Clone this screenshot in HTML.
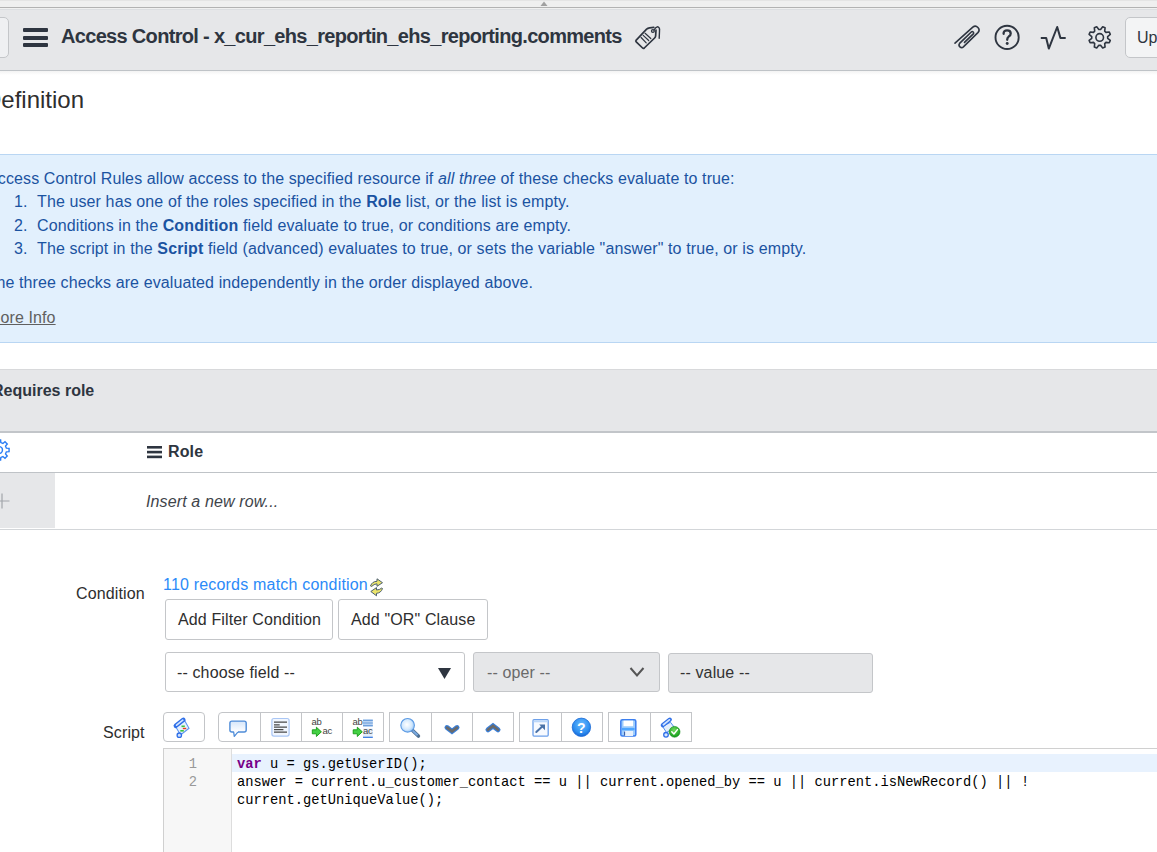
<!DOCTYPE html>
<html><head><meta charset="utf-8">
<style>
*{box-sizing:border-box;margin:0;padding:0}
html,body{width:1157px;height:852px;overflow:hidden;background:#fff;font-family:"Liberation Sans",sans-serif;color:#2e2e2e;position:relative}
svg{position:absolute;overflow:visible}
#s0{position:absolute;left:0;top:0;width:1157px;height:1px;background:#e4e4e4}
#s1{position:absolute;left:0;top:1px;width:1157px;height:6px;background:#efefef}
#s2{position:absolute;left:0;top:7px;width:1157px;height:1px;background:#b2b2b2}
#s3{position:absolute;left:0;top:8px;width:1157px;height:1px;background:#f0f0f0}
#s4{position:absolute;left:0;top:9px;width:1157px;height:1px;background:#dcdee1}
#hdr{position:absolute;left:0;top:10px;width:1157px;height:61px;background:#e6e7e9;border-bottom:1px solid #bfc3c7}
#shad{position:absolute;left:0;top:71px;width:1157px;height:4px;background:linear-gradient(#f3f3f3,#fff)}
#lbtn{position:absolute;left:-30px;top:17px;width:39px;height:41px;background:#eff0f2;border:1px solid #c4c6c9;border-radius:5px}
.ham i{position:absolute;left:23px;width:25px;height:4px;background:#2e3540;border-radius:1px}
#title{position:absolute;left:61px;top:25px;font-size:20px;line-height:23px;font-weight:bold;color:#2e3540;white-space:nowrap;letter-spacing:-0.68px}
#upd{position:absolute;left:1125px;top:17px;width:60px;height:41px;background:#f3f4f5;border:1px solid #c4c6c9;border-radius:5px;font-size:16px;color:#2e3540;padding:11px 0 0 11px;line-height:18px}
#def{position:absolute;left:-16px;top:86px;font-size:24px;line-height:27px;color:#2e2e2e;white-space:nowrap}
#info{position:absolute;left:0;top:154px;width:1157px;height:189px;background:#e2f0fd;border-top:1px solid #b9d6f3;border-bottom:1px solid #b9d6f3;color:#1b53a1;font-size:16px;line-height:18px}
#info .t{position:absolute;white-space:nowrap;letter-spacing:0.115px}
#rr{position:absolute;left:0;top:369px;width:1157px;height:64px;background:#e6e7e9;border-top:1px solid #d8d9db;border-bottom:2px solid #c2c5c9}
#rr .t{position:absolute;left:-8px;top:12px;font-size:16px;line-height:18px;font-weight:bold;color:#2e3540;white-space:nowrap}
#thead{position:absolute;left:0;top:433px;width:1157px;height:40px;border-bottom:1px solid #bfc3c7;background:#fff}
#irow{position:absolute;left:0;top:473px;width:1157px;height:57px;border-bottom:1px solid #d3d6d9;background:#fff}
#irow .c0{position:absolute;left:0;top:0;width:55px;height:55px;background:#e6e7e9}
.lbl{position:absolute;font-size:16px;line-height:18px;color:#2e2e2e;white-space:nowrap;letter-spacing:0.13px}
.btn{position:absolute;height:41px;border:1px solid #c4c6c9;border-radius:3px;background:#fff;font-size:16px;color:#2e2e2e;white-space:nowrap}
.btn span{position:absolute;top:11px;line-height:18px;letter-spacing:0.13px}
.sel{position:absolute;height:40px;border:1px solid #c4c6c9;border-radius:3px;font-size:16px;white-space:nowrap}
.sel span{position:absolute;left:11px;top:10px;line-height:18px;letter-spacing:0.13px}
.tg{position:absolute;top:712px;height:30px;border:1px solid #c3c5c8;background:#fff}
.tg i{position:absolute;top:0;width:1px;height:28px;background:#c3c5c8}
#code{position:absolute;left:163px;top:748px;width:1010px;height:120px;border:1px solid #d0d0d0;background:#fff}
#gut{position:absolute;left:0;top:0;width:68px;height:118px;background:#f7f7f7;border-right:1px solid #ddd}
#hl{position:absolute;left:68px;top:5px;width:940px;height:18px;background:#e8f2fe}
.ln{position:absolute;left:23px;font-family:"Liberation Mono",monospace;font-size:13.75px;line-height:18px;color:#999;width:10px;text-align:right}
.cl{position:absolute;left:73px;font-family:"Liberation Mono",monospace;font-size:13.75px;line-height:18px;color:#000;white-space:pre}
</style></head><body>
<div id="s0"></div><div id="s1"></div><div id="s2"></div><div id="s3"></div><div id="s4"></div>
<svg style="left:0;top:0" width="1157" height="10"><path d="M540.5,6 L544,1.5 L547.5,6 Z" fill="#a0a0a0"/></svg>
<div id="hdr"></div>
<div id="shad"></div>
<div id="lbtn"></div>
<div class="ham"><i style="top:28px"></i><i style="top:36px"></i><i style="top:43px"></i></div>
<div id="title">Access Control - x_cur_ehs_reportin_ehs_reporting.comments</div>
<!-- tag icon -->
<svg style="left:0;top:0" width="1157" height="70">
  <g fill="none" stroke="#2e3540" stroke-width="1.7" stroke-linejoin="round" stroke-linecap="round">
    <path d="M636,40.3 L646.6,29.2 Q647.8,28.2 649.5,27.9 L653.8,27.3 M656,30.2 L655.6,36.2 Q655.4,37.2 654.6,38 L644.3,48 Q643.4,48.8 642.6,48 L636.2,41.8 Q635.4,41 636,40.3"/>
    <path d="M641.1,37.5 L646.2,42.8 M643.2,35.4 L648.7,40.5 M645.1,33.3 L650.8,38.5" stroke-width="1.2"/>
    <circle cx="652.9" cy="31" r="1.4" stroke-width="1.3"/>
    <path d="M654,30 Q656,26.5 658,26.8 Q660,27.5 659.5,31 L659.2,38.2" stroke-width="1.4"/>
  </g>
  <!-- paperclip -->
  <path d="M955,43.2 L972.8,27.2 A3.72,3.72 0 0 1 977.9,32.6 L963.4,46.9 A2.6,2.6 0 0 1 959.6,43.4 L971.3,32 A1.38,1.38 0 0 1 973.3,33.9 L964.5,42.4" fill="none" stroke="#2e3540" stroke-width="1.6" stroke-linecap="round"/>
<!-- help -->
  <circle cx="1007.1" cy="37.4" r="11.6" fill="none" stroke="#2e3540" stroke-width="1.9"/>
  <path d="M1003.6,33.8 Q1003.4,30.4 1007.1,30.4 Q1010.7,30.4 1010.7,33.5 Q1010.7,35.4 1008.7,36.6 Q1007.2,37.6 1007.2,39.8" fill="none" stroke="#2e3540" stroke-width="2.3" stroke-linecap="round"/>
  <circle cx="1007.2" cy="43.5" r="1.45" fill="#2e3540"/>
  <!-- pulse -->
  <polyline points="1040.8,37.9 1046.2,37.9 1048.8,48.6 1057.2,27 1060.4,37.9 1065.7,37.9" fill="none" stroke="#2e3540" stroke-width="2" stroke-linejoin="round"/>
  <!-- gear -->
  <g transform="translate(1099.7,37.4)" fill="none" stroke="#2e3540" stroke-width="1.6" stroke-linejoin="round">
    <path d="M0.88,-7.95 L2.99,-10.59 L5.37,-9.60 L5.00,-6.24 L6.24,-5.00 L9.60,-5.37 L10.59,-2.99 L7.95,-0.88 L7.95,0.88 L10.59,2.99 L9.60,5.37 L6.24,5.00 L5.00,6.24 L5.37,9.60 L2.99,10.59 L0.88,7.95 L-0.88,7.95 L-2.99,10.59 L-5.37,9.60 L-5.00,6.24 L-6.24,5.00 L-9.60,5.37 L-10.59,2.99 L-7.95,0.88 L-7.95,-0.88 L-10.59,-2.99 L-9.60,-5.37 L-6.24,-5.00 L-5.00,-6.24 L-5.37,-9.60 L-2.99,-10.59 L-0.88,-7.95 Z"/>
    <circle r="3.8"/>
  </g>
</svg>
<div id="upd">Up</div>
<div id="def">Definition</div>
<div id="info">
  <div class="t" id="l1" style="left:-13px;top:15px">Access Control Rules allow access to the specified resource if <i>all three</i> of these checks evaluate to true:</div>
  <div class="t" style="left:14px;top:38px">1.</div><div class="t" id="i1" style="left:37px;top:38px">The user has one of the roles specified in the <b>Role</b> list, or the list is empty.</div>
  <div class="t" style="left:14px;top:62px">2.</div><div class="t" id="i2" style="left:37px;top:62px">Conditions in the <b>Condition</b> field evaluate to true, or conditions are empty.</div>
  <div class="t" style="left:14px;top:85px">3.</div><div class="t" id="i3" style="left:37px;top:85px">The script in the <b>Script</b> field (advanced) evaluates to true, or sets the variable "answer" to true, or is empty.</div>
  <div class="t" id="l5" style="left:-13.5px;top:119px">The three checks are evaluated independently in the order displayed above.</div>
  <div class="t" id="l6" style="left:-13px;top:154px;color:#606060;text-decoration:underline">More Info</div>
</div>
<div id="rr"><div class="t">Requires role</div></div>
<div id="thead"></div>
<svg style="left:0;top:0" width="1157" height="852">
  <g fill="#2e3540"><rect x="147" y="446" width="15" height="2.6"/><rect x="147" y="450.8" width="15" height="2.6"/><rect x="147" y="455.6" width="15" height="2.6"/></g>
</svg>
<div class="lbl" style="left:168px;top:443px;font-weight:bold;color:#2e3540">Role</div>
<div id="irow">
  <div class="c0"></div>
  <div class="lbl" style="left:146px;top:20px;font-style:italic;color:#40444a">Insert a new row...</div>
</div>
<svg style="left:0;top:0" width="200" height="600">
  <path d="M-6,501 L9.5,501 M2,493.5 L2,508.5" stroke="#a2a6ab" stroke-width="1.2" fill="none"/>
  <g transform="translate(-1,450)" fill="none" stroke="#2a7df5" stroke-width="1.4">
    <path d="M-1.83,-7.38 L-1.60,-10.07 L1.60,-10.07 L1.83,-7.38 L3.92,-6.51 L6.00,-8.25 L8.25,-6.00 L6.51,-3.92 L7.38,-1.83 L10.07,-1.60 L10.07,1.60 L7.38,1.83 L6.51,3.92 L8.25,6.00 L6.00,8.25 L3.92,6.51 L1.83,7.38 L1.60,10.07 L-1.60,10.07 L-1.83,7.38 L-3.92,6.51 L-6.00,8.25 L-8.25,6.00 L-6.51,3.92 L-7.38,1.83 L-10.07,1.60 L-10.07,-1.60 L-7.38,-1.83 L-6.51,-3.92 L-8.25,-6.00 L-6.00,-8.25 L-3.92,-6.51 Z"/>
    <circle r="3.5"/>
  </g>
</svg>
<div class="lbl" style="left:76px;top:585px">Condition</div>
<div class="lbl" style="left:163px;top:576px;color:#2b8af8;letter-spacing:0.19px">110 records match condition</div>
<svg style="left:0;top:0" width="400" height="600">
  <g fill="#ebe46c" stroke="#4d6070" stroke-width="1" stroke-linejoin="round">
    <path d="M370.5,586 Q372,581.5 377,581.3 L377,578.8 L382.5,582.7 L377,586.3 L377,583.8 Q374,584 371.5,586.5 Z"/>
    <path d="M382.5,588.5 Q381,593 376.5,593.3 L376.5,595.8 L370.8,591.5 L376.5,587.6 L376.5,590 Q379.5,590 381.8,588 Z"/>
  </g>
</svg>
<div class="btn" style="left:165px;top:599px;width:168px"><span style="left:12px">Add Filter Condition</span></div>
<div class="btn" style="left:338px;top:599px;width:150px"><span style="left:12px">Add "OR" Clause</span></div>
<div class="sel" style="left:165px;top:652px;width:300px;background:#fff;color:#2e2e2e"><span style="top:11px">-- choose field --</span></div>
<div class="sel" style="left:473px;top:652px;width:187px;background:#e6e7e9;color:#6a6a6a"><span style="left:13px;top:11px">-- oper --</span></div>
<div class="sel" style="left:668px;top:653px;width:205px;background:#e6e7e9;color:#333"><span>-- value --</span></div>
<svg style="left:0;top:0" width="900" height="700">
  <path d="M438,668 L451,668 L444.5,679 Z" fill="#2e3540"/>
  <path d="M630.5,668 L637,675.5 L643.5,668" fill="none" stroke="#555" stroke-width="2"/>
</svg>
<div class="lbl" style="left:103px;top:724px">Script</div>
<!-- toolbar -->
<div class="tg" style="left:163px;width:42px;border-radius:4px"></div>
<div class="tg" style="left:218px;width:166px;border-radius:4px 0 0 4px"><i style="left:41px"></i><i style="left:82px"></i><i style="left:123px"></i></div>
<div class="tg" style="left:389px;width:125px"><i style="left:41px"></i><i style="left:82px"></i></div>
<div class="tg" style="left:519px;width:84px"><i style="left:41px"></i></div>
<div class="tg" style="left:608px;width:84px"><i style="left:41px"></i></div>
<svg style="left:0;top:0" width="1157" height="852">
  <defs>
    <linearGradient id="gb" x1="0" y1="0" x2="0" y2="1"><stop offset="0" stop-color="#d6e6fa"/><stop offset="1" stop-color="#ffffff"/></linearGradient>
    <radialGradient id="gs" cx="0.45" cy="0.45" r="0.6"><stop offset="0" stop-color="#ffffff"/><stop offset="0.6" stop-color="#d4e9fd"/><stop offset="1" stop-color="#8fc1f3"/></radialGradient>
    <radialGradient id="gh" cx="0.5" cy="0.35" r="0.65"><stop offset="0" stop-color="#6bbcff"/><stop offset="0.7" stop-color="#2d8ef0"/><stop offset="1" stop-color="#1566d6"/></radialGradient>
    <radialGradient id="gg" cx="0.45" cy="0.35" r="0.65"><stop offset="0" stop-color="#6fdc5a"/><stop offset="1" stop-color="#119a1a"/></radialGradient>
  </defs>
  <!-- 1 script -->
  <g>
    <path d="M175.8,727 L184.6,720.6 L189,728.3 L180.6,735 Z" fill="#e6f0fd" stroke="#5b95f0" stroke-width="1.1"/>
    <path d="M175.8,725.8 L183.4,719.8" stroke="#2f6fe8" stroke-width="4.4" stroke-linecap="round"/>
    <path d="M176.6,725.2 L182.8,720.2" stroke="#d2e4ff" stroke-width="1.7" stroke-linecap="round"/>
    <circle cx="179.3" cy="735.2" r="2.2" fill="#cfe0fb" stroke="#2f6fe8" stroke-width="1.3"/>
    <path d="M181.5,726.3 L184.8,726.3" stroke="#3cc43c" stroke-width="1.6"/>
    <path d="M182.8,728.5 L186.2,728.5" stroke="#e8401c" stroke-width="1.4"/>
    <path d="M180.3,730.8 L183.8,730.8" stroke="#3cc43c" stroke-width="1.6"/>
  </g>
  <!-- 2 comment -->
  <g>
    <rect x="229.9" y="721.1" width="16.3" height="10.9" rx="2" fill="url(#gb)" stroke="#4f8cd8" stroke-width="1.4"/>
    <path d="M233.6,731.6 L234.3,736.3 L238.2,731.6" fill="#fff" stroke="#4f8cd8" stroke-width="1.3" stroke-linejoin="round"/>
    <path d="M233.9,731.3 L238,731.3" stroke="#fff" stroke-width="1"/>
  </g>
  <!-- 3 format -->
  <g>
    <rect x="271.9" y="718.5" width="17.2" height="17.6" rx="2" fill="#f1f6fe" stroke="#a9c6f5" stroke-width="1.2"/>
    <g stroke="#4a4a4a" stroke-width="1.3">
      <path d="M274,722.2 L287,722.2 M274,724.8 L279.7,724.8 M274,727.2 L287,727.2 M274,729.7 L283.4,729.7 M274,732.1 L287,732.1"/>
    </g>
  </g>
  <!-- 4 replace -->
  <g font-family="Liberation Sans" font-size="9.5" fill="#444" letter-spacing="-0.4">
    <text x="311.6" y="725.4">ab</text>
    <text x="322.6" y="734.2">ac</text>
    <path d="M312.3,729.8 L316.4,729.8 L316.4,727.2 L321.4,731.8 L316.4,736.5 L316.4,733.8 L312.3,733.8 Z" fill="#44d044" stroke="#139a13" stroke-width="0.9" stroke-linejoin="round"/>
  </g>
  <!-- 5 replace all -->
  <g font-family="Liberation Sans" font-size="9.5" fill="#444" letter-spacing="-0.4">
    <rect x="363" y="719" width="9.8" height="8" fill="#b9d3f2"/>
    <path d="M363,720.5 L372.8,720.5 M363,723 L372.8,723 M363,725.5 L372.8,725.5" stroke="#6d9fdc" stroke-width="1"/>
    <rect x="363" y="728.5" width="9.8" height="8.5" fill="#e5effb"/>
    <path d="M363,737.3 L372.8,737.3" stroke="#2e74e0" stroke-width="1.2"/>
    <text x="352.5" y="725.4">ab</text>
    <text x="363" y="734.2">ac</text>
    <path d="M353.2,729.8 L357.3,729.8 L357.3,727.2 L362.3,731.8 L357.3,736.5 L357.3,733.8 L353.2,733.8 Z" fill="#44d044" stroke="#139a13" stroke-width="0.9" stroke-linejoin="round"/>
  </g>
  <!-- 6 search -->
  <g>
    <path d="M412.6,730.5 L418.4,736" stroke="#4f6f92" stroke-width="3.6" stroke-linecap="round"/>
    <path d="M412.8,730.7 L417.6,735.2" stroke="#79a9e0" stroke-width="2"/>
    <circle cx="407.6" cy="725.3" r="6.8" fill="url(#gs)" stroke="#5b9ae4" stroke-width="1.1"/>
  </g>
  <!-- 7 down -->
  <path d="M447,727.6 L452,731.4 L457,727.6" fill="none" stroke="#3a7fd8" stroke-width="5" stroke-linejoin="miter" stroke-linecap="round"/>
  <path d="M447,727.6 L452,731.4 L457,727.6" fill="none" stroke="#6a6a6a" stroke-width="2.6" stroke-linejoin="miter" stroke-linecap="round"/>
  <!-- 8 up -->
  <path d="M488,729.8 L493,726 L498,729.8" fill="none" stroke="#3a7fd8" stroke-width="5" stroke-linejoin="miter" stroke-linecap="round"/>
  <path d="M488,729.8 L493,726 L498,729.8" fill="none" stroke="#6a6a6a" stroke-width="2.6" stroke-linejoin="miter" stroke-linecap="round"/>
  <!-- 9 expand -->
  <g>
    <rect x="533" y="719.7" width="15.2" height="16.4" rx="1" fill="#f7faff" stroke="#6da0ea" stroke-width="1.3"/>
    <rect x="533.6" y="720.3" width="14" height="2" fill="#bcd8fa"/>
    <path d="M536.3,732 L542.5,726.2" stroke="#4a72a8" stroke-width="2" stroke-linecap="round"/>
    <path d="M539.2,724.4 L545,724.4 L545,730.2 Z" fill="#4a72a8"/>
  </g>
  <!-- 10 help -->
  <g>
    <circle cx="581.4" cy="727.3" r="9.2" fill="url(#gh)" stroke="#1a6ad6" stroke-width="0.8"/>
    <text x="581.4" y="732.8" font-family="Liberation Sans" font-weight="bold" font-size="14" fill="#fff" text-anchor="middle">?</text>
  </g>
  <!-- 11 save -->
  <g>
    <rect x="620.8" y="719.8" width="15" height="16.3" rx="1.5" fill="#9fcdfc" stroke="#3c7ff0" stroke-width="1.5"/>
    <rect x="623.5" y="720.6" width="9.6" height="5.6" fill="#fff"/>
    <rect x="622" y="727.9" width="12.6" height="2.4" fill="#4da6ff"/>
    <rect x="624" y="731" width="9" height="5" fill="#e8f1fc"/>
    <path d="M624.6,731.5 L624.6,735.8" stroke="#2850a0" stroke-width="1"/>
  </g>
  <!-- 12 script check -->
  <g>
    <path d="M662.5,726.3 L670.5,722.3 L674.5,727.5 L666.5,732.5 Z" fill="#e3eefc" stroke="#4f8ff0" stroke-width="1"/>
    <path d="M662.8,725.2 L669.8,719.6" stroke="#2f6fe8" stroke-width="4.2" stroke-linecap="round"/>
    <path d="M663.4,724.7 L669.4,719.9" stroke="#cfe3ff" stroke-width="1.8" stroke-linecap="round"/>
    <circle cx="666" cy="734.8" r="2.3" fill="#d8e8ff" stroke="#2f6fe8" stroke-width="1.3"/>
    <circle cx="674.6" cy="731.8" r="5.4" fill="url(#gg)" stroke="#0e8a14" stroke-width="0.6"/>
    <path d="M671.8,731.8 L673.9,734 L677.4,729.6" fill="none" stroke="#fff" stroke-width="1.5" stroke-linecap="round" stroke-linejoin="round"/>
  </g>
</svg>
<div id="code">
  <div id="gut"></div>
  <div id="hl"></div>
  <div class="ln" style="top:7.3px">1</div>
  <div class="ln" style="top:25.3px">2</div>
  <div class="cl" style="top:7px"><b style="color:#708">var</b> u = gs.getUserID();</div>
  <div class="cl" style="top:25px">answer = current.u_customer_contact == u || current.opened_by == u || current.isNewRecord() || !</div>
  <div class="cl" style="top:43px">current.getUniqueValue();</div>
</div>
</body></html>
